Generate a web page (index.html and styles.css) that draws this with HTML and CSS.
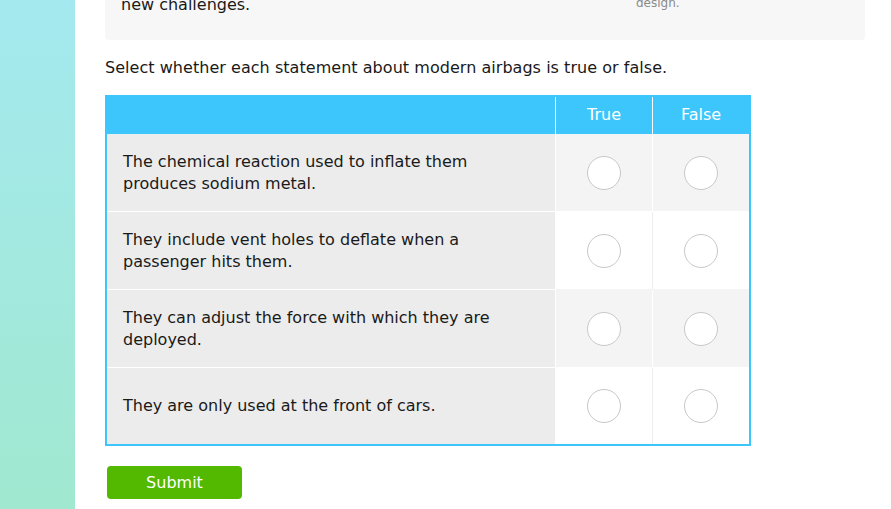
FILE: index.html
```html
<!DOCTYPE html>
<html lang="en">
<head>
    <meta charset="UTF-8">
    <meta name="viewport" content="width=device-width, initial-scale=1.0">
    <title>Airbags - True or False</title>
    <link rel="stylesheet" href="styles.css">
</head>
<body>
    <div class="page">
        <div class="sidebar"></div>
        <div class="main">
            <div class="info-card">
                <div class="info-text">new challenges.</div>
                <div class="info-caption">design.</div>
            </div>

            <p class="question">Select whether each statement about modern airbags is true or false.</p>

            <table class="quiz-table">
                <colgroup>
                    <col class="col-statement">
                    <col class="col-option">
                    <col class="col-option">
                </colgroup>
                <thead>
                    <tr>
                        <th></th>
                        <th class="option">True</th>
                        <th class="option">False</th>
                    </tr>
                </thead>
                <tbody>
                    <tr>
                        <td class="statement">The chemical reaction used to inflate them produces sodium metal.</td>
                        <td class="option"><span class="radio"></span></td>
                        <td class="option"><span class="radio"></span></td>
                    </tr>
                    <tr>
                        <td class="statement">They include vent holes to deflate when a passenger hits them.</td>
                        <td class="option"><span class="radio"></span></td>
                        <td class="option"><span class="radio"></span></td>
                    </tr>
                    <tr>
                        <td class="statement">They can adjust the force with which they are deployed.</td>
                        <td class="option"><span class="radio"></span></td>
                        <td class="option"><span class="radio"></span></td>
                    </tr>
                    <tr>
                        <td class="statement">They are only used at the front of cars.</td>
                        <td class="option"><span class="radio"></span></td>
                        <td class="option"><span class="radio"></span></td>
                    </tr>
                </tbody>
            </table>

            <button class="submit-button">Submit</button>
        </div>
    </div>
</body>
</html>
```

FILE: styles.css
```css
* {
    margin: 0;
    padding: 0;
    box-sizing: border-box;
}

body {
    font-family: "DejaVu Sans", Verdana, sans-serif;
    font-size: 16px;
    line-height: 22px;
    color: #1a1a1a;
    background: #ffffff;
    overflow: hidden;
}

.page {
    display: flex;
    min-height: 100vh;
}

.sidebar {
    width: 75px;
    flex-shrink: 0;
    background: linear-gradient(to bottom, #a4e9ef, #a1e8d0);
}

.main {
    padding-left: 30px;
    width: 790px;
}

.info-card {
    display: flex;
    margin-top: -20px;
    padding: 14px 16px 24px;
    background: #f7f7f7;
    border-radius: 0 0 4px 4px;
    width: 760px;
}

.info-text {
    width: 515px;
}

.info-caption {
    font-size: 12px;
    line-height: 16px;
    margin-top: 1px;
    color: #8a8a8a;
}

.question {
    margin-top: 17px;
    letter-spacing: 0.04px;
}

.quiz-table {
    margin-top: 16px;
    width: 646px;
    table-layout: fixed;
    border-spacing: 0;
    border: 2px solid #3dc6fc;
}

.col-statement {
    width: 448px;
}

.col-option {
    width: 97px;
}

.quiz-table th {
    height: 37px;
    padding-bottom: 2px;
    background: #3dc6fc;
    color: #ffffff;
    font-weight: normal;
    text-align: center;
}

.quiz-table th.option,
.quiz-table td.option {
    border-left: 1px solid #ffffff;
}

.quiz-table td {
    height: 78px;
    border-bottom: 1px solid #ffffff;
}

.quiz-table tbody tr:last-child td {
    height: 76px;
    border-bottom: none;
}

.statement {
    background: #ececec;
    padding: 0 40px 0 16px;
}

.option {
    text-align: center;
}

tbody tr:nth-child(odd) td.option {
    background: #f4f4f4;
}

tbody tr:nth-child(even) td.option {
    background: #ffffff;
}

tbody tr:nth-child(even) td.option + td.option {
    border-left-color: #eeeeee;
}

tbody tr:nth-child(even) td.option {
    border-bottom-color: #f4f4f4;
}

.radio {
    display: block;
    margin: 0 auto;
    width: 34px;
    height: 34px;
    border: 1.5px solid #c8c8c8;
    border-radius: 50%;
    background: #ffffff;
}

.submit-button {
    display: block;
    margin: 20px 0 0 2px;
    width: 135px;
    height: 33px;
    background: #52b800;
    color: #ffffff;
    border: none;
    border-radius: 4px;
    font-family: inherit;
    font-size: 16px;
    cursor: pointer;
}
```
